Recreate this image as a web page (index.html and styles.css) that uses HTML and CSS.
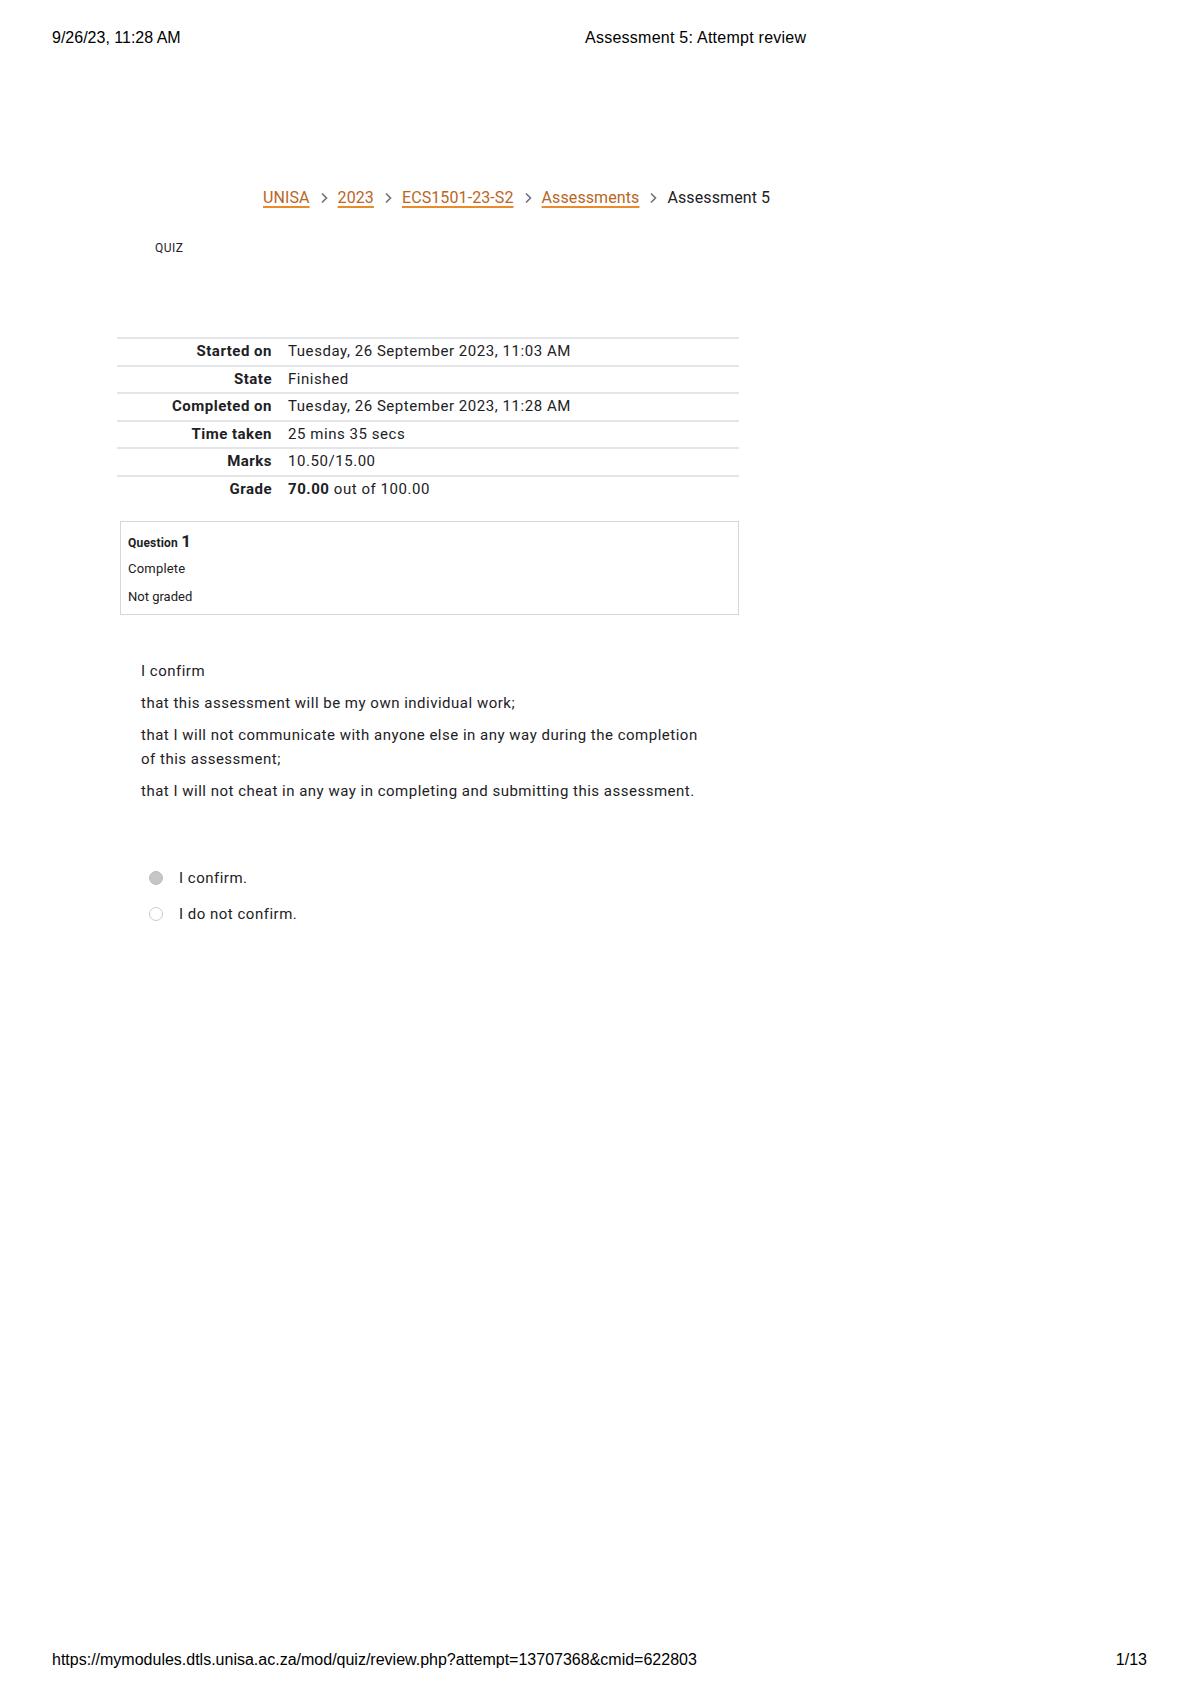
FILE: index.html
```html
<!DOCTYPE html>
<html lang="en">
<head>
<meta charset="utf-8">
<title>Assessment 5: Attempt review</title>
<link rel="stylesheet" href="styles.css">
</head>
<body>
<div class="page">
  <header class="print-header">
    <span class="ph-date">9/26/23, 11:28 AM</span>
    <span class="ph-title">Assessment 5: Attempt review</span>
  </header>

  <nav class="breadcrumb">
    <a href="#">UNISA</a>
    <svg class="chev" viewBox="0 0 8 12" width="8" height="12"><path d="M2 1.5 L6.5 6 L2 10.5" fill="none" stroke="#6a737b" stroke-width="1.6"/></svg>
    <a href="#">2023</a>
    <svg class="chev" viewBox="0 0 8 12" width="8" height="12"><path d="M2 1.5 L6.5 6 L2 10.5" fill="none" stroke="#6a737b" stroke-width="1.6"/></svg>
    <a href="#">ECS1501-23-S2</a>
    <svg class="chev" viewBox="0 0 8 12" width="8" height="12"><path d="M2 1.5 L6.5 6 L2 10.5" fill="none" stroke="#6a737b" stroke-width="1.6"/></svg>
    <a href="#">Assessments</a>
    <svg class="chev" viewBox="0 0 8 12" width="8" height="12"><path d="M2 1.5 L6.5 6 L2 10.5" fill="none" stroke="#6a737b" stroke-width="1.6"/></svg>
    <span class="current">Assessment 5</span>
  </nav>

  <div class="quiz-label">QUIZ</div>

  <table class="summary">
    <tbody>
      <tr><th>Started on</th><td>Tuesday, 26 September 2023, 11:03 AM</td></tr>
      <tr><th>State</th><td>Finished</td></tr>
      <tr><th>Completed on</th><td>Tuesday, 26 September 2023, 11:28 AM</td></tr>
      <tr><th>Time taken</th><td>25 mins 35 secs</td></tr>
      <tr><th>Marks</th><td>10.50/15.00</td></tr>
      <tr><th>Grade</th><td><b>70.00</b> out of 100.00</td></tr>
    </tbody>
  </table>

  <div class="qinfo">
    <div class="qno-line">Question <span class="qno">1</span></div>
    <div class="qstate">Complete</div>
    <div class="qgrade">Not graded</div>
  </div>

  <div class="qtext">
    <p>I confirm</p>
    <p>that this assessment will be my own individual work;</p>
    <p>that I will not communicate with anyone else in any way during the completion of this assessment;</p>
    <p>that I will not cheat in any way in completing and submitting this assessment.</p>
  </div>

  <div class="answers">
    <div class="answer"><span class="radio checked"></span><span class="alabel">I confirm.</span></div>
    <div class="answer"><span class="radio"></span><span class="alabel">I do not confirm.</span></div>
  </div>

  <footer class="print-footer">
    <span>https://mymodules.dtls.unisa.ac.za/mod/quiz/review.php?attempt=13707368&amp;cmid=622803</span>
    <span>1/13</span>
  </footer>
</div>
</body>
</html>
```

FILE: styles.css
```css
html, body {
  margin: 0;
  padding: 0;
  background: #ffffff;
}

.page {
  display: flex;
  flex-direction: column;
  min-height: 1698px;
  box-sizing: border-box;
  font-family: Roboto, "Liberation Sans", sans-serif;
  color: #1d2125;
}

.print-header,
.print-footer {
  font-family: "Liberation Sans", Arial, sans-serif;
  font-size: 16px;
  line-height: 18px;
  color: #000;
}

.print-header {
  display: flex;
  padding: 29px 0 0 52px;
}

.ph-date {
  width: 533px;
}

.ph-title {
  letter-spacing: 0.25px;
}

.breadcrumb {
  display: flex;
  align-items: center;
  gap: 10px;
  margin: 139px 0 0 263px;
  font-size: 16px;
  line-height: 24px;
  letter-spacing: 0.1px;
}

.breadcrumb a {
  color: #b9661f;
  text-decoration: underline;
  text-decoration-color: #ea8a2b;
  text-decoration-thickness: 2px;
  text-underline-offset: 3px;
}

.breadcrumb .chev {
  display: block;
}

.breadcrumb .current {
  color: #1d2125;
}

.quiz-label {
  margin: 30px 0 0 155px;
  font-size: 12px;
  line-height: 16px;
  letter-spacing: 0.5px;
  color: #1d2125;
}

.summary {
  margin: 81px 0 0 117px;
  width: 622px;
  border-collapse: collapse;
  font-size: 15px;
}

.summary th,
.summary td {
  border-top: 2px solid #e3e5e8;
  padding: 3px 8px;
  line-height: 19.5px;
  vertical-align: top;
}

.summary th {
  width: 147px;
  text-align: right;
  font-weight: 700;
  letter-spacing: 0.5px;
}

.summary td {
  text-align: left;
  font-weight: 400;
  letter-spacing: 0.55px;
}

.qinfo {
  margin: 19px 0 0 120px;
  width: 619px;
  box-sizing: border-box;
  border: 1px solid #d4d7db;
  padding: 9px 7px 7px;
}

.qno-line {
  font-size: 12px;
  font-weight: 700;
  line-height: 20px;
  letter-spacing: 0.2px;
}

.qno {
  font-size: 17px;
}

.qstate {
  margin-top: 6px;
  font-size: 13px;
  line-height: 20px;
  letter-spacing: 0.2px;
}

.qgrade {
  margin-top: 8px;
  font-size: 13px;
  line-height: 20px;
}

.qtext {
  margin: 44px 0 0 141px;
  width: 566px;
  font-size: 15px;
  line-height: 24px;
  letter-spacing: 0.5px;
}

.qtext p {
  margin: 0 0 8px;
}

.answers {
  margin: 49px 0 0 149px;
  font-size: 15px;
  letter-spacing: 0.5px;
}

.answer {
  display: flex;
  align-items: center;
  height: 36px;
}

.radio {
  width: 12px;
  height: 12px;
  border: 1px solid #c8cbcf;
  border-radius: 50%;
  background: #fff;
  margin-right: 16px;
  flex: none;
}

.radio.checked {
  background: #c4c6c8;
  border-color: #b9bcbf;
}

.alabel {
  line-height: 24px;
}

.print-footer {
  display: flex;
  justify-content: space-between;
  margin-top: auto;
  padding: 0 53px 29px 52px;
}
```
